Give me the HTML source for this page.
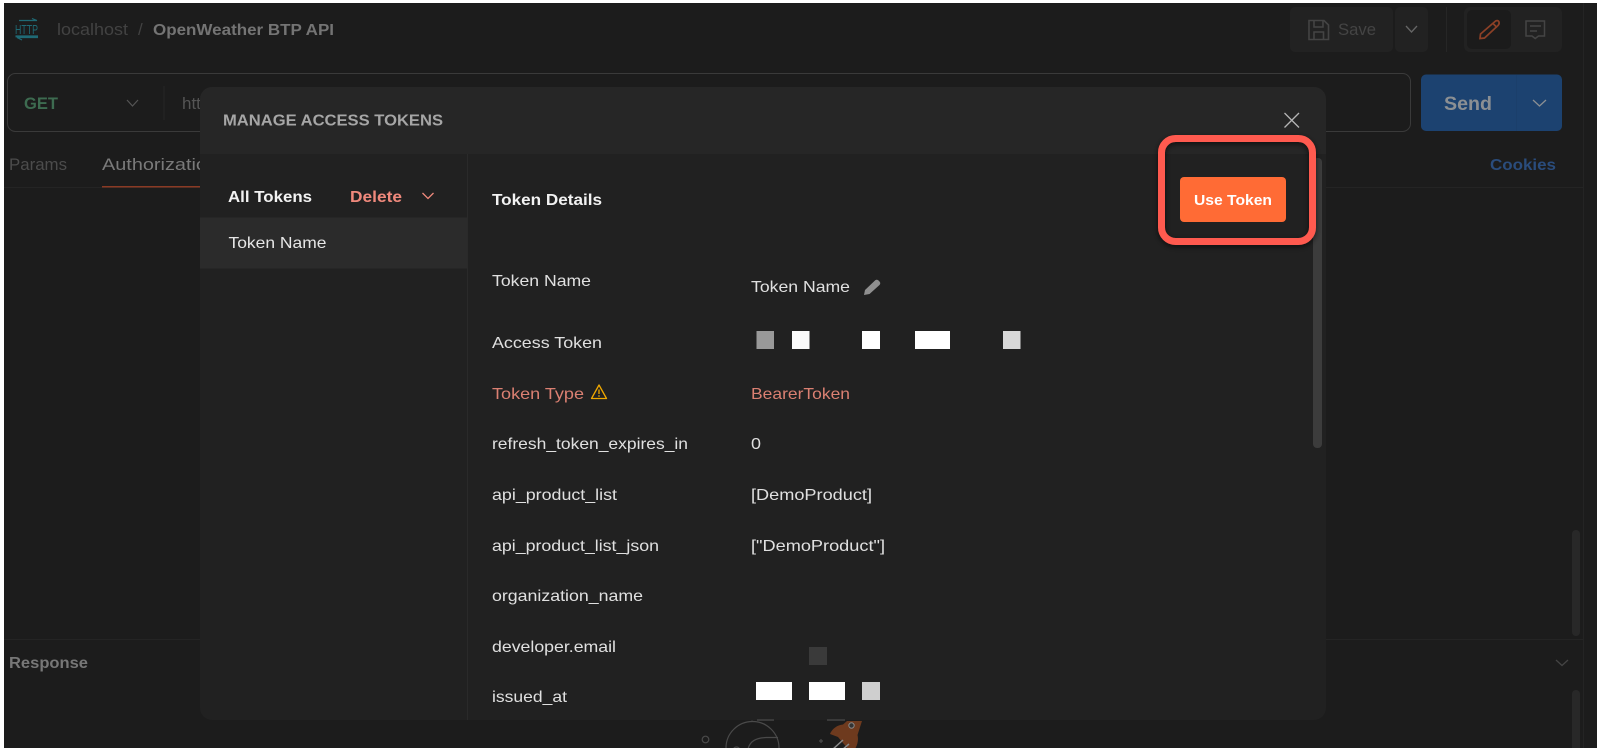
<!DOCTYPE html>
<html><head><meta charset="utf-8">
<style>
html,body{margin:0;padding:0;background:#fff;width:1600px;height:753px;overflow:hidden}
svg{display:block;filter:blur(.3px)}
text{font-family:"Liberation Sans",sans-serif;font-size:16px}
.b{font-weight:700}
</style></head>
<body>
<svg width="1600" height="753" viewBox="0 0 1600 753" xmlns="http://www.w3.org/2000/svg">
<defs>
<filter id="sh" x="-20%" y="-20%" width="140%" height="140%"><feDropShadow dx="0" dy="2" stdDeviation="3" flood-color="#000" flood-opacity=".6"/></filter>
<clipPath id="page"><rect x="4" y="3" width="1593" height="745"/></clipPath>
</defs>
<rect width="1600" height="753" fill="#fff"/>
<rect x="4" y="3" width="1593" height="745" fill="#1c1c1c"/>
<g clip-path="url(#page)">
<!-- Top bar -->
<g fill="none" stroke="#1f6a75" stroke-width="1.200">
<path d="M19 20.500H37M32 18.500L37 20.500M15.500 36H38M15.500 36.800H38M17 37.500H38M17 37.500L22 40"/>
</g>
<text x="15" y="34" textLength="23" lengthAdjust="spacingAndGlyphs" fill="#1f6a75" style="font-size:13px">HTTP</text>
<text x="57" y="35" textLength="71" lengthAdjust="spacingAndGlyphs" fill="#424242" style="font-size:17px">localhost</text>
<text x="138" y="35" fill="#424242" style="font-size:17px">/</text>
<text x="153" y="35" class="b" textLength="181" lengthAdjust="spacingAndGlyphs" fill="#747474">OpenWeather BTP API</text>

<rect x="1290" y="7" width="103" height="45" rx="5" fill="#222"/>
<rect x="1395" y="7" width="33" height="45" rx="5" fill="#222"/>
<g fill="none" stroke="#444" stroke-width="1.600">
<path d="M1309 20.500H1324L1328.500 25V39.500H1309Z"/>
<path d="M1314 20.500V27H1323V20.500M1314 39.500V32H1323.500V39.500"/>
</g>
<text x="1338" y="35" textLength="38" lengthAdjust="spacingAndGlyphs" fill="#444" style="font-size:17px">Save</text>
<path d="M1406 26L1411.500 32L1417 26" fill="none" stroke="#666" stroke-width="1.300"/>
<rect x="1446" y="7" width="1" height="45" fill="#262626"/>
<rect x="1464" y="7" width="98" height="45" rx="6" fill="#222"/>
<rect x="1467" y="10" width="44" height="39" rx="5" fill="#1b1b1b"/>
<g fill="none" stroke="#8c4026" stroke-width="1.700">
<path d="M1480 38.500L1480.500 34L1495 21.500C1496.500 20 1498.500 20.500 1499 22C1499.500 23.500 1499 24.500 1498 25.500L1484.500 38Z"/>
<path d="M1493 23.500L1497 27.500"/>
</g>
<g fill="none" stroke="#444" stroke-width="1.500">
<path d="M1526 21H1544.500V36H1538.500L1535.200 38.500L1532 36H1526Z"/>
<path d="M1530 26H1541M1530 31H1537"/>
</g>

<!-- URL bar -->
<rect x="7.500" y="73.500" width="1403" height="58" rx="8" fill="#1c1c1c" stroke="#3a3a3a"/>
<text x="24" y="109" class="b" textLength="34" lengthAdjust="spacingAndGlyphs" fill="#3d6b50" style="font-size:17px">GET</text>
<path d="M127 100L132.500 106L138 100" fill="none" stroke="#555" stroke-width="1.200"/>
<rect x="163.500" y="86" width="1" height="34" fill="#262626"/>
<text x="182" y="109" fill="#555" style="font-size:17px">https</text>

<rect x="1421" y="74.500" width="141" height="56.500" rx="5" fill="#1c4270"/>
<rect x="1516" y="75" width="1" height="56" fill="#1b3f6b"/>
<text x="1444" y="110" class="b" textLength="48" lengthAdjust="spacingAndGlyphs" fill="#8b8f93" style="font-size:19px">Send</text>
<path d="M1533 100L1539.500 106L1546 100" fill="none" stroke="#8b8f93" stroke-width="1.300"/>

<!-- Tabs -->
<text x="9" y="170" textLength="58" lengthAdjust="spacingAndGlyphs" fill="#4c4c4c" style="font-size:17px">Params</text>
<text x="102" y="170" textLength="116" lengthAdjust="spacingAndGlyphs" fill="#7a7a7a" style="font-size:17px">Authorization</text>
<rect x="4" y="187" width="1580" height="1" fill="#242424"/>
<rect x="102" y="186" width="100" height="1.500" fill="#8a3a24"/>
<text x="1490" y="170" class="b" textLength="66" lengthAdjust="spacingAndGlyphs" fill="#2a4c7c">Cookies</text>
<rect x="1583" y="3" width="1" height="745" fill="#242424"/>

<!-- Response -->
<rect x="4" y="639" width="1580" height="1" fill="#242424"/>
<text x="9" y="668" class="b" textLength="79" lengthAdjust="spacingAndGlyphs" fill="#777">Response</text>
<path d="M1556 660L1562 665.500L1568 660" fill="none" stroke="#444" stroke-width="1.300"/>
<rect x="1572" y="530" width="8" height="106" rx="4" fill="#282828"/>
<rect x="1572" y="690" width="8" height="70" rx="4" fill="#282828"/>

<!-- Illustration -->
<g fill="none" stroke="#4a4a4a" stroke-width="1.200">
<circle cx="705.500" cy="739.500" r="3.300"/>
<circle cx="752.500" cy="748" r="26.500"/>
<path d="M748 749C750 741 756 738 766 737.500L778 737.500"/>
<circle cx="736.500" cy="750.500" r="3.500"/>
<path d="M821 739V743M819 741H823"/>
<path d="M752 720.500V722"/>
</g>
<path d="M847 721H862L857.500 735C858.500 739 858 744 855 749H848L843 743L838 737L830 734C832 729 837 725 843 724.500Z" fill="#6e3a1e"/>
<circle cx="851.500" cy="725.500" r="2.700" fill="#333" stroke="#888" stroke-width="1"/>
<path d="M843 740L832 750M849 744L842 750" stroke="#8a8a8a" stroke-width="1.500" fill="none"/>

<!-- Modal -->
<rect x="200" y="87" width="1126" height="633" rx="12" fill="#212121"/>
<path d="M200 154V99a12 12 0 0 1 12-12H1314a12 12 0 0 1 12 12V154Z" fill="#262626"/>
<rect x="467" y="154" width="1" height="566" fill="#2a2a2a"/>
<rect x="200" y="217.500" width="267" height="51" fill="#2b2b2b"/>
<rect x="757" y="719" width="17" height="2" fill="#3a3a3a"/>
<rect x="827" y="719" width="18" height="2" fill="#3a3a3a"/>
<text x="223" y="125.500" class="b" textLength="220" lengthAdjust="spacingAndGlyphs" fill="#a6a6a6">MANAGE ACCESS TOKENS</text>
<path d="M1284.500 113L1299 127.500M1299 113L1284.500 127.500" stroke="#b5b5b5" stroke-width="1.300" fill="none"/>
<text x="228" y="202" class="b" textLength="84" lengthAdjust="spacingAndGlyphs" fill="#f2f2f2">All Tokens</text>
<text x="350" y="202" class="b" textLength="52" lengthAdjust="spacingAndGlyphs" fill="#f0897c">Delete</text>
<path d="M422.500 193L428 198.500L433.500 193" fill="none" stroke="#f0897c" stroke-width="1.300"/>
<text x="228.500" y="248" textLength="98" lengthAdjust="spacingAndGlyphs" fill="#e6e6e6">Token Name</text>

<text x="492" y="205" class="b" textLength="110" lengthAdjust="spacingAndGlyphs" fill="#f2f2f2">Token Details</text>

<rect x="1313" y="158" width="9" height="290" rx="4" fill="#3c3c3c"/>
<!-- Labels -->
<g fill="#e0e0e0">
<text x="492" y="286" textLength="99" lengthAdjust="spacingAndGlyphs">Token Name</text>
<text x="492" y="348" textLength="110" lengthAdjust="spacingAndGlyphs">Access Token</text>
<text x="492" y="449" textLength="196" lengthAdjust="spacingAndGlyphs">refresh_token_expires_in</text>
<text x="492" y="500" textLength="125" lengthAdjust="spacingAndGlyphs">api_product_list</text>
<text x="492" y="551" textLength="167" lengthAdjust="spacingAndGlyphs">api_product_list_json</text>
<text x="492" y="601" textLength="151" lengthAdjust="spacingAndGlyphs">organization_name</text>
<text x="492" y="652" textLength="124" lengthAdjust="spacingAndGlyphs">developer.email</text>
<text x="492" y="702" textLength="75" lengthAdjust="spacingAndGlyphs">issued_at</text>
<text x="751" y="292" textLength="99" lengthAdjust="spacingAndGlyphs">Token Name</text>
<text x="751" y="449" textLength="10" lengthAdjust="spacingAndGlyphs">0</text>
<text x="751" y="500" textLength="121" lengthAdjust="spacingAndGlyphs">[DemoProduct]</text>
<text x="751" y="551" textLength="134" lengthAdjust="spacingAndGlyphs">["DemoProduct"]</text>
</g>
<text x="492" y="399" textLength="92" lengthAdjust="spacingAndGlyphs" fill="#db8072">Token Type</text>
<text x="751" y="399" textLength="99" lengthAdjust="spacingAndGlyphs" fill="#db8072">BearerToken</text>
<path d="M599 385L606.500 398.500H591.500Z" fill="none" stroke="#f0a800" stroke-width="1.300" stroke-linejoin="round"/>
<path d="M599 389.500V394M599 395.200V396.800" stroke="#f0a800" stroke-width="1.300"/>
<path d="M864 295L865 290L875 280.500C876 279.500 877.500 279.500 878.500 280.500L879.500 281.500C880.500 282.500 880.500 284 879.500 285L869.500 294Z" fill="#8f8f8f"/>

<!-- redaction squares -->
<rect x="756.500" y="331" width="17.500" height="18" fill="#999"/>
<rect x="792" y="331" width="17.500" height="18" fill="#fafafa"/>
<rect x="862" y="331" width="18" height="18" fill="#fff"/>
<rect x="915" y="331" width="35" height="18" fill="#fff"/>
<rect x="1003" y="331" width="17.500" height="18" fill="#d8d8d8"/>
<rect x="809" y="647" width="18" height="18" fill="#3a3a3a"/>
<rect x="756" y="682" width="36" height="18" fill="#fff"/>
<rect x="809" y="682" width="36" height="18" fill="#fff"/>
<rect x="862" y="682" width="18" height="18" fill="#cfcfcf"/>

<!-- Highlight + button -->
<rect x="1161.500" y="138.500" width="151" height="103" rx="14" fill="none" stroke="#ff5a4f" stroke-width="7" filter="url(#sh)"/>
<rect x="1180" y="177" width="106" height="45" rx="4" fill="#ff6b35"/>
<text x="1194" y="205" class="b" textLength="78" lengthAdjust="spacingAndGlyphs" fill="#fff" style="font-size:15px">Use Token</text>
</g>
</svg>
</body></html>
